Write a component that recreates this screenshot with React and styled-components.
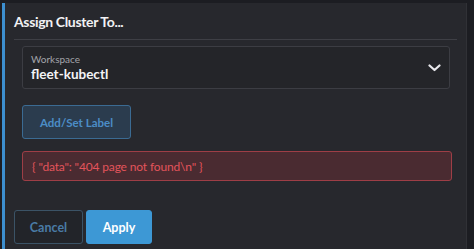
import React from "react";
import styled, { createGlobalStyle } from "styled-components";

const Global = createGlobalStyle`
  html, body { margin: 0; padding: 0; background: #1c1d22; }
  body { font-family: Lato, "Liberation Sans", sans-serif; }
  * { box-sizing: border-box; }
`;

const Page = styled.div`
  display: flex;
  width: 474px;
  height: 249px;
  padding-top: 3px;
  padding-left: 2px;
  background: #1c1d22;
  overflow: hidden;
`;

const Accent = styled.div`
  width: 3px;
  background: #3d8fcf;
  flex: none;
`;

const Panel = styled.div`
  width: 462px;
  background: #27282d;
  display: flex;
  flex-direction: column;
  padding: 0 9px 0 9px;
  border-right: 1px solid #303136;
`;

const Title = styled.h1`
  margin: 0;
  padding-top: 11px;
  height: 37px;
  font-size: 14px;
  font-weight: 700;
  color: #f2f2f4;
  line-height: 16px;
  border-bottom: 1px solid #3e3f45;
  letter-spacing: -0.35px;
`;

const Body = styled.div`
  display: flex;
  flex-direction: column;
  padding: 6px 7px 0 8px;
`;

const Select = styled.div`
  height: 43px;
  border: 1px solid #3c3d43;
  border-radius: 3px;
  background: #242529;
  display: flex;
  align-items: center;
  justify-content: space-between;
  padding: 0 8px 0 8px;
`;

const SelectText = styled.div`
  display: flex;
  flex-direction: column;
  gap: 2px;
`;

const Label = styled.span`
  font-size: 10px;
  color: #a3a4aa;
  line-height: 12px;
`;

const Value = styled.span`
  font-size: 13.5px;
  font-weight: 700;
  color: #f4f4f6;
  line-height: 15px;
`;

const Button = styled.button`
  font-family: inherit;
  height: 34px;
  border-radius: 3px;
  font-size: ${(p) => p.$size || 12}px;
  font-weight: 700;
  cursor: pointer;
  padding: 0;
  width: ${(p) => p.$w}px;
  background: ${(p) => p.$bg};
  color: ${(p) => p.$fg};
  border: 1px solid ${(p) => p.$border};
`;

const AddRow = styled.div`
  margin-top: 16px;
  display: flex;
`;

const ErrorBox = styled.div`
  margin-top: 12px;
  height: 30px;
  width: 430px;
  border: 1.5px solid #9e3e46;
  border-radius: 3px;
  background: #4a2b31;
  color: #e3545b;
  font-size: 12px;
  letter-spacing: -0.15px;
  display: flex;
  align-items: center;
  padding-left: 9px;
`;

const Footer = styled.div`
  margin-top: auto;
  padding-bottom: 5px;
  display: flex;
  gap: 3px;
`;

const Chevron = () => (
  <svg width="13" height="8" viewBox="0 0 13 8">
    <path d="M1.5 1.5 L6.5 6 L11.5 1.5" fill="none" stroke="#e8e8ec" strokeWidth="2.2" strokeLinecap="round" strokeLinejoin="round" />
  </svg>
);

export default function App() {
  return (
    <>
      <Global />
      <Page>
        <Accent />
        <Panel>
          <Title>Assign Cluster To...</Title>
          <Body>
            <Select>
              <SelectText>
                <Label>Workspace</Label>
                <Value>fleet-kubectl</Value>
              </SelectText>
              <Chevron />
            </Select>
            <AddRow>
              <Button $w={109} $bg="#2b3c4e" $fg="#4b8dc6" $border="#3b6b93" $size={11.5}>
                Add/Set Label
              </Button>
            </AddRow>
            <ErrorBox>{'{ "data": "404 page not found\\n" }'}</ErrorBox>
          </Body>
          <Footer>
            <Button $w={69} $bg="#222429" $fg="#4a7ba6" $border="#3b5366" $size={12.5}>
              Cancel
            </Button>
            <Button $w={66} $bg="#3d98d5" $fg="#ffffff" $border="#3d98d5" $size={12.5}>
              Apply
            </Button>
          </Footer>
        </Panel>
      </Page>
    </>
  );
}
